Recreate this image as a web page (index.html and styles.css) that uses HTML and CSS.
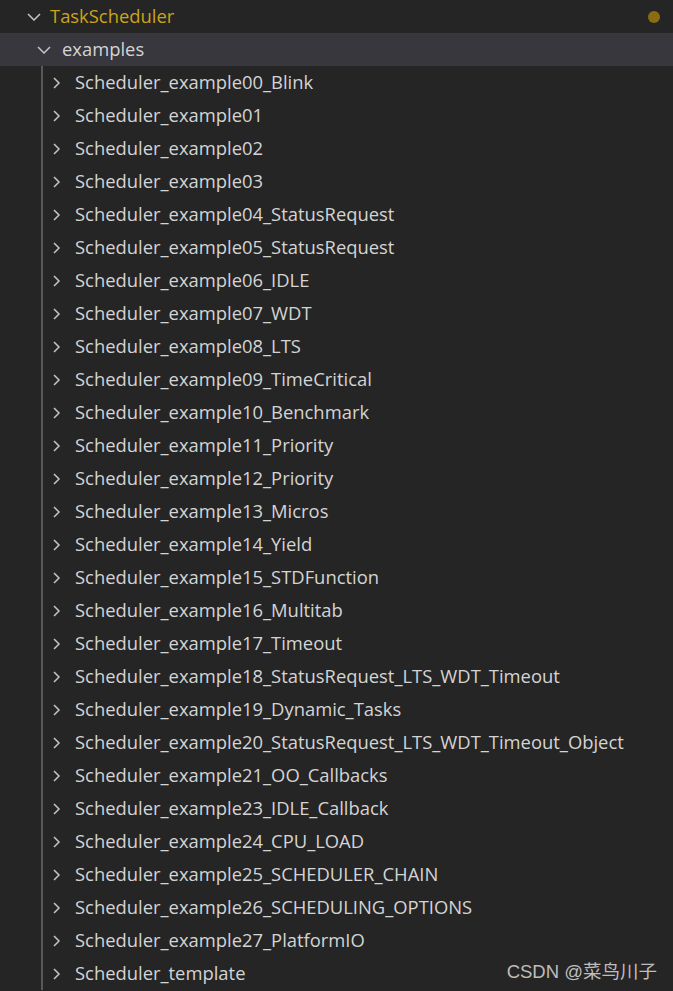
FILE: index.html
```html
<!DOCTYPE html>
<html lang="en">
<head>
  <meta charset="UTF-8">
  <title>TaskScheduler</title>
  <link rel="stylesheet" href="styles.css">
</head>
<body>
  <div class="explorer">
    <div class="row root">
      <svg class="chev down" width="14" height="8" viewBox="0 0 14 8"><polyline points="1,1 7,7 13,1"/></svg>
      <span class="label">TaskScheduler</span>
      <span class="dot"></span>
    </div>
    <div class="row folder selected">
      <svg class="chev down" width="14" height="8" viewBox="0 0 14 8"><polyline points="1,1 7,7 13,1"/></svg>
      <span class="label">examples</span>
    </div>
    <div class="children" id="children"></div>
  </div>
  <div class="watermark">CSDN @菜鸟川子</div>

  <script>
const names = [
  'Scheduler_example00_Blink',
  'Scheduler_example01',
  'Scheduler_example02',
  'Scheduler_example03',
  'Scheduler_example04_StatusRequest',
  'Scheduler_example05_StatusRequest',
  'Scheduler_example06_IDLE',
  'Scheduler_example07_WDT',
  'Scheduler_example08_LTS',
  'Scheduler_example09_TimeCritical',
  'Scheduler_example10_Benchmark',
  'Scheduler_example11_Priority',
  'Scheduler_example12_Priority',
  'Scheduler_example13_Micros',
  'Scheduler_example14_Yield',
  'Scheduler_example15_STDFunction',
  'Scheduler_example16_Multitab',
  'Scheduler_example17_Timeout',
  'Scheduler_example18_StatusRequest_LTS_WDT_Timeout',
  'Scheduler_example19_Dynamic_Tasks',
  'Scheduler_example20_StatusRequest_LTS_WDT_Timeout_Object',
  'Scheduler_example21_OO_Callbacks',
  'Scheduler_example23_IDLE_Callback',
  'Scheduler_example24_CPU_LOAD',
  'Scheduler_example25_SCHEDULER_CHAIN',
  'Scheduler_example26_SCHEDULING_OPTIONS',
  'Scheduler_example27_PlatformIO',
  'Scheduler_template'
];

const list = document.getElementById('children');
names.forEach(name => {
  const row = document.createElement('div');
  row.className = 'row item';
  row.innerHTML = '<svg class="chev right" width="8" height="12" viewBox="0 0 8 12"><polyline points="1,1 6,6 1,11"/></svg>' +
    '<span class="label"></span>';
  row.querySelector('.label').textContent = name;
  list.appendChild(row);
});
  </script>
</body>
</html>
```

FILE: styles.css
```css
body {
  margin: 0;
  background-color: #252526;
  font-family: "Open Sans", "Noto Sans", sans-serif;
  font-size: 18.4px;
  color: #d4d4d4;
  width: 673px;
  height: 991px;
  overflow: hidden;
  position: relative;
}

.explorer {
  display: flex;
  flex-direction: column;
}

.row {
  height: 33px;
  display: flex;
  align-items: center;
  white-space: nowrap;
}

.label {
  padding-bottom: 2px;
}

.chev {
  flex: none;
  fill: none;
  stroke: #c5c5c5;
  stroke-width: 1.5;
}

.root {
  padding-left: 27px;
}

.root .chev {
  margin-right: 9px;
}

.root .label {
  color: #cca418;
}

.dot {
  margin-left: auto;
  margin-right: 13px;
  width: 12px;
  height: 12px;
  border-radius: 50%;
  background-color: #8a6d13;
}

.folder {
  padding-left: 37px;
}

.folder .chev {
  margin-right: 11px;
}

.selected {
  background-color: #37373d;
}

.children {
  margin-left: 41px;
  border-left: 2px solid #585858;
}

.item {
  padding-left: 10px;
}

.item .chev {
  margin-right: 14px;
}

.watermark {
  position: absolute;
  right: 16px;
  bottom: 8px;
  font-family: "Liberation Sans", "Noto Sans CJK SC", sans-serif;
  font-size: 18.5px;
  color: #bdbdbd;
}
```
